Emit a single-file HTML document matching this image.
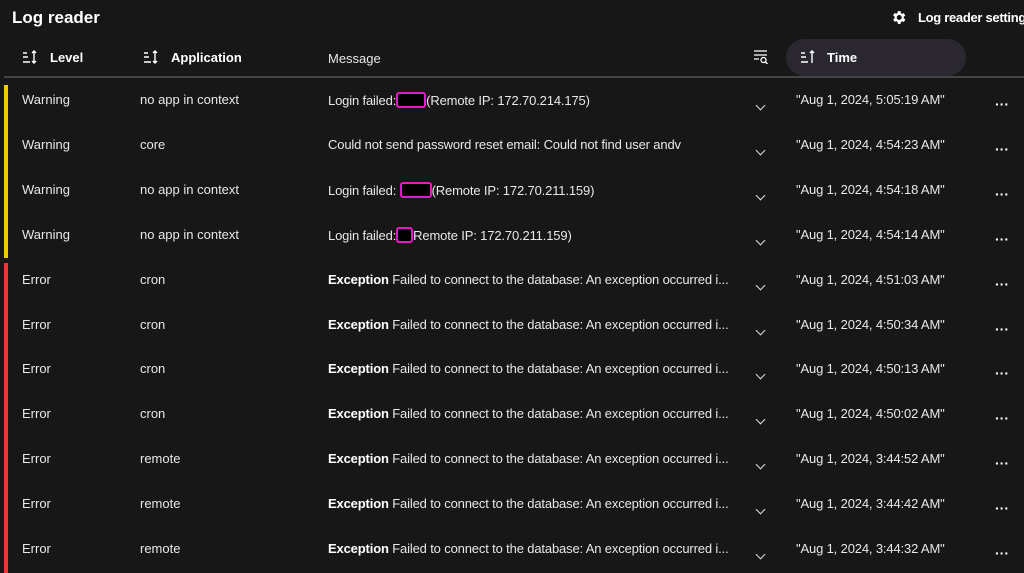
<!DOCTYPE html>
<html><head><style>
body{margin:0;width:1024px;height:573px;background:#171717;color:#e8e8e8;font-family:"Liberation Sans",sans-serif;font-size:13px;overflow:hidden;position:relative}
.a{position:absolute;white-space:nowrap}
.t{font-weight:bold;font-size:17px;color:#fff}
.h{font-weight:bold;color:#fff}
.m{letter-spacing:-0.15px}
.bar{position:absolute;left:4px;width:4px}
.red{display:inline-block;width:26px;height:12px;border:2px solid #e619c8;background:#000;border-radius:3px;vertical-align:-3px}
.chev{position:absolute;width:6px;height:6px;border-right:1.5px solid #ddd;border-bottom:1.5px solid #ddd;transform:rotate(45deg)}
.dots{position:absolute;font-weight:bold;font-size:14px;color:#fff}
</style></head><body>
<div class="a t" style="left:12px;top:8px">Log reader</div>
<svg class="a" style="left:890px;top:9px" width="17" height="17" viewBox="0 0 24 24"><path fill="#fff" d="M19.4 13a7.5 7.5 0 000-2l2.1-1.6-2-3.5-2.5 1a7.6 7.6 0 00-1.7-1L15 3h-4l-.4 2.7a7.6 7.6 0 00-1.7 1l-2.5-1-2 3.5L6.6 11a7.5 7.5 0 000 2l-2.1 1.6 2 3.5 2.5-1c.5.4 1.1.7 1.7 1L11 21h4l.4-2.7c.6-.3 1.2-.6 1.7-1l2.5 1 2-3.5zM13 15.5a3.5 3.5 0 110-7 3.5 3.5 0 010 7z"/></svg>
<div class="a h" style="left:918px;top:10px;letter-spacing:-0.3px">Log reader settings</div>
<div class="a" style="left:786px;top:39px;width:180px;height:37px;background:#2a2730;border-radius:19px"></div>
<svg class="a" style="left:22px;top:50px" width="16" height="14" viewBox="0 0 16 14" stroke="#fff" stroke-width="1.4" fill="none"><path d="M1 3h4M1 7h5M1 12h7M12 1v12M10 3l2-2 2 2M10 11l2 2 2-2"/></svg>
<div class="a h" style="left:50px;top:50px">Level</div>
<svg class="a" style="left:143px;top:50px" width="16" height="14" viewBox="0 0 16 14" stroke="#fff" stroke-width="1.4" fill="none"><path d="M1 3h4M1 7h5M1 12h7M12 1v12M10 3l2-2 2 2M10 11l2 2 2-2"/></svg>
<div class="a h" style="left:171px;top:50px">Application</div>
<div class="a" style="left:328px;top:51px">Message</div>
<svg class="a" style="left:753px;top:50px" width="16" height="14" viewBox="0 0 16 14" stroke="#fff" stroke-width="1.3" fill="none"><path d="M1 1h13M1 5h13M1 9h5"/><circle cx="10.5" cy="10" r="2.5"/><path d="M12.5 12l2 2"/></svg>
<svg class="a" style="left:800px;top:50px" width="16" height="14" viewBox="0 0 16 14" stroke="#fff" stroke-width="1.4" fill="none"><path d="M1 3h4M1 7h5M1 12h7M12 1v12M10 3l2-2 2 2"/></svg>
<div class="a h" style="left:827px;top:50px">Time</div>
<div class="a" style="left:4px;top:76px;width:1020px;height:2px;background:#444"></div>
<div class="bar" style="top:85px;height:173px;background:#f2cc00"></div>
<div class="bar" style="top:263px;height:310px;background:#e53935"></div>
<div id="rows"></div>
<script>
var R=[["Warning","no app in context",'Login failed:<span class="red"></span>(Remote IP: 172.70.214.175)',"5:05:19"],
["Warning","core","Could not send password reset email: Could not find user andv","4:54:23"],
["Warning","no app in context",'Login failed: <span class="red" style="width:28px"></span>(Remote IP: 172.70.211.159)',"4:54:18"],
["Warning","no app in context",'Login failed:<span class="red" style="width:13px"></span>Remote IP: 172.70.211.159)',"4:54:14"]];
var ex='<b style="color:#fff">Exception</b> Failed to connect to the database: An exception occurred i...';
[["cron","4:51:03"],["cron","4:50:34"],["cron","4:50:13"],["cron","4:50:02"],["remote","3:44:52"],["remote","3:44:42"],["remote","3:44:32"]].forEach(function(x){R.push(["Error",x[0],ex,x[1]])});
var h="";R.forEach(function(r,i){var y=92+i*44.9;
h+='<div class="a" style="left:22px;top:'+y+'px">'+r[0]+'</div><div class="a" style="left:140px;top:'+y+'px">'+r[1]+'</div><div class="a m" style="left:328px;top:'+y+'px">'+r[2]+'</div><div class="a m" style="left:796px;top:'+y+'px">"Aug 1, 2024, '+r[3]+' AM"</div><div class="chev" style="left:757px;top:'+(y+10)+'px"></div><div class="dots" style="left:995px;top:'+(y+4)+'px">···</div>';});
document.getElementById("rows").innerHTML=h;
</script>
</body></html>
